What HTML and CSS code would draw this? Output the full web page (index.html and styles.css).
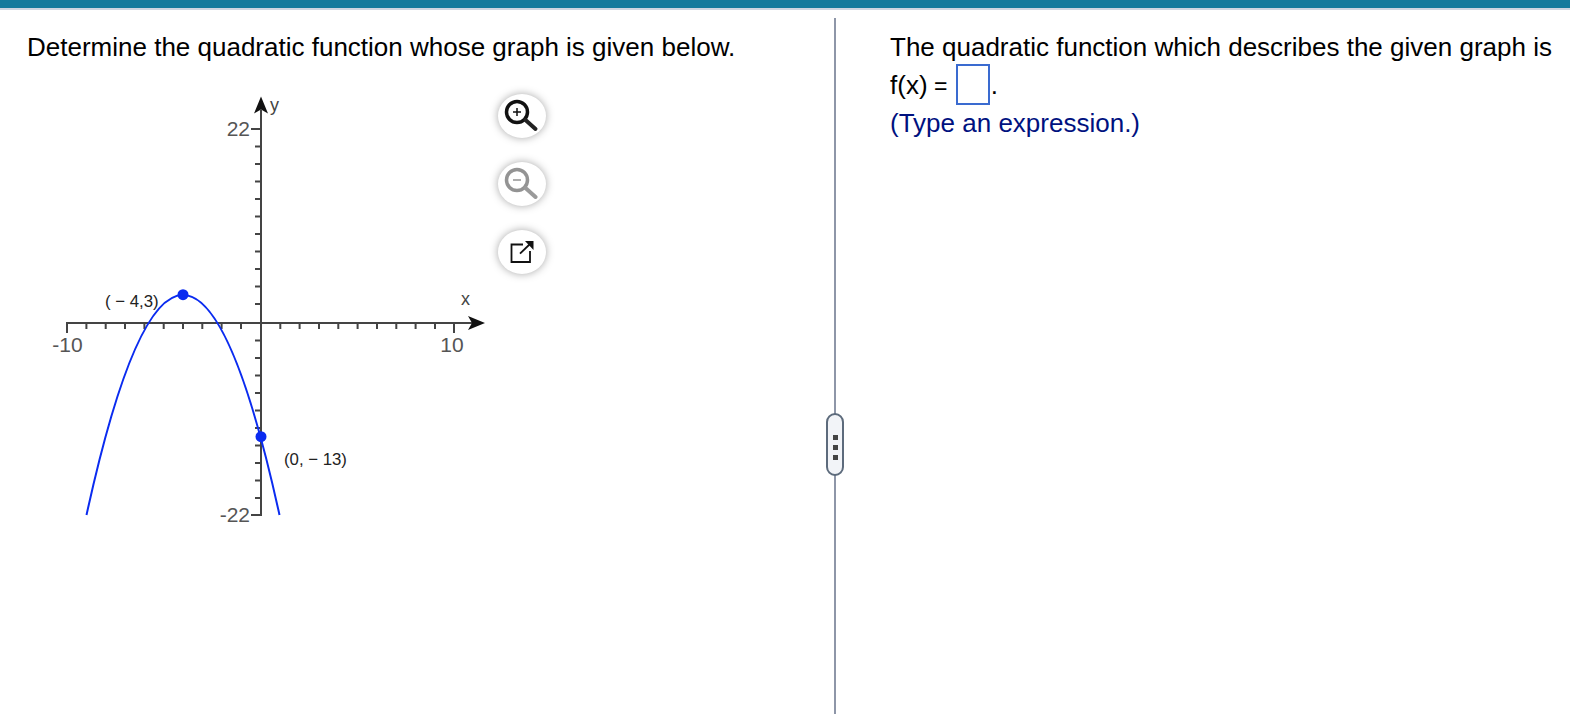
FILE: index.html
```html
<!DOCTYPE html>
<html lang="en">
<head>
<meta charset="utf-8">
<title>Quadratic function</title>
<link rel="stylesheet" href="styles.css">
</head>
<body>
<div class="topbar"></div>
<main class="panes">
  <section class="left">
    <p class="question">Determine the quadratic function whose graph is given below.</p>
    <div class="figure">
      <svg class="graph" width="500" height="460" viewBox="0 0 500 460">
        <g class="axis">
          <path d="M67 243V233H476"/>
          <path d="M261 20V425H251"/>
          <path d="M86.400 233v6M105.700 233v6M125 233v6M144.400 233v6M163.700 233v6M183 233v6M202.300 233v6M221.600 233v6M241 233v6M280.300 233v6M299.600 233v6M319 233v6M338.300 233v6M357.600 233v6M377 233v6M396.300 233v6M415.600 233v6M435 233v6M454 233v10"/>
          <path d="M251 39h10M255 56.500h6M255 74h6M255 91.500h6M255 109h6M255 126.500h6M255 144h6M255 161.500h6M255 179h6M255 196.500h6M255 214h6M255 250.500h6M255 268h6M255 285.500h6M255 303h6M255 320.500h6M255 338h6M255 355.500h6M255 373h6M255 390.500h6M255 408h6"/>
        </g>
        <path class="head" d="M261 6.500L268 23.500L261 19.500L254 23.500Z"/>
        <path class="head" d="M485 233L468 226L472 233L468 240Z"/>
        <path class="curve" d="M86.500 425Q183 -15 279.500 425"/>
        <circle class="pt" cx="183" cy="204.700" r="5.500"/>
        <circle class="pt" cx="261" cy="346.700" r="5.500"/>
        <text class="tick" x="67.500" y="262" text-anchor="middle">-10</text>
        <text class="tick" x="452" y="262" text-anchor="middle">10</text>
        <text class="tick" x="250" y="46" text-anchor="end">22</text>
        <text class="tick" x="250" y="432" text-anchor="end">-22</text>
        <text class="letter" x="270" y="21">y</text>
        <text class="letter" x="461" y="215">x</text>
        <text class="note" x="105" y="217">( − 4,3)</text>
        <text class="note" x="284" y="375">(0, − 13)</text>
      </svg>
      <div class="tools">
        <button class="tool" type="button" aria-label="Zoom in">
          <svg width="36" height="36" viewBox="0 0 36 36"><circle class="lens" cx="13" cy="14" r="10.500"/><path class="hand" d="M21.500 22L31.500 31"/><path class="sign" d="M9 14h8M13 10v8"/></svg>
        </button>
        <button class="tool dim" type="button" aria-label="Zoom out">
          <svg width="36" height="36" viewBox="0 0 36 36"><circle class="lens" cx="13" cy="14" r="10.500"/><path class="hand" d="M21.500 22L31.500 31"/><path class="sign" d="M9 14h8"/></svg>
        </button>
        <button class="tool" type="button" aria-label="Open in new window">
          <svg width="36" height="36" viewBox="0 0 36 36"><path class="frame" d="M19 10.500H7.500V28H26V17"/><path class="frame" d="M16 19.700L26 10"/><path class="tip" d="M21 7H29.500V16Z"/></svg>
        </button>
      </div>
    </div>
  </section>
  <div class="divider"><span class="grip"><i></i><i></i><i></i></span></div>
  <section class="right">
    <p class="line">The quadratic function which describes the given graph is</p>
    <p class="line">f(x)<span class="eq"> = </span><span class="answer"></span>.</p>
    <p class="line hint">(Type an expression.)</p>
  </section>
</main>
</body>
</html>
```
FILE: styles.css
```css
* { box-sizing: border-box; }
html, body { margin: 0; height: 100%; }
body {
  background: #fff;
  color: #000;
  font-family: "Liberation Sans", Arial, sans-serif;
  overflow: hidden;
}
.topbar {
  height: 10px;
  background: #147a9c;
  border-bottom: 2px solid #cdd5e0;
}
.panes {
  display: flex;
  height: 704px;
}
.left {
  width: 834px;
  padding: 18px 0 0 27px;
}
.question, .line {
  margin: 0;
  font-size: 26px;
  line-height: 38px;
}
.figure {
  display: flex;
  margin: 24px 0 0 -27px;
}
.graph { display: block; flex: none; }
.tools {
  display: flex;
  flex-direction: column;
  gap: 24px;
  margin-top: 4px;
  margin-left: -2px;
}
.tool {
  width: 48px;
  height: 44px;
  padding: 0;
  border: 0;
  border-radius: 50%;
  background: #fff;
  box-shadow: 0 0 8px rgba(0, 0, 0, .35);
  display: flex;
  align-items: center;
  justify-content: center;
}
.dim svg { opacity: .45; }
.axis path { fill: none; stroke: #444; stroke-width: 2; }
.head { fill: #111; }
.curve { fill: none; stroke: #0a2bf0; stroke-width: 2; }
.pt { fill: #0a2bf0; }
.tick { font-size: 21px; fill: #555; }
.letter { font-size: 18px; fill: #444; }
.note { font-size: 16.800px; fill: #222; }
.lens { fill: none; stroke: #111; stroke-width: 3.500; }
.hand { fill: none; stroke: #222; stroke-width: 4; stroke-linecap: round; }
.sign { fill: none; stroke: #111; stroke-width: 1.500; }
.frame { fill: none; stroke: #111; stroke-width: 1.800; }
.tip { fill: #111; }
.divider {
  position: relative;
  width: 2px;
  margin-top: 8px;
  background: #8e96a8;
  flex: none;
}
.grip {
  position: absolute;
  left: -8px;
  top: 395px;
  width: 18px;
  height: 63px;
  padding-top: 5px;
  border: 2px solid #5d6b7c;
  border-radius: 9px;
  background: #f2f4f8;
  display: flex;
  flex-direction: column;
  align-items: center;
  justify-content: center;
  gap: 5px;
}
.grip i { width: 5px; height: 5px; background: #444; }
.right {
  padding: 18px 0 0 54px;
  flex: 1;
  white-space: nowrap;
}
.eq { font-size: 23px; line-height: 1; }
.answer {
  display: inline-block;
  width: 34px;
  height: 41px;
  margin: -9px 1px -4px 2px;
  border: 2px solid #3a6bd0;
  vertical-align: middle;
}
.hint { color: #00117f; }
```
